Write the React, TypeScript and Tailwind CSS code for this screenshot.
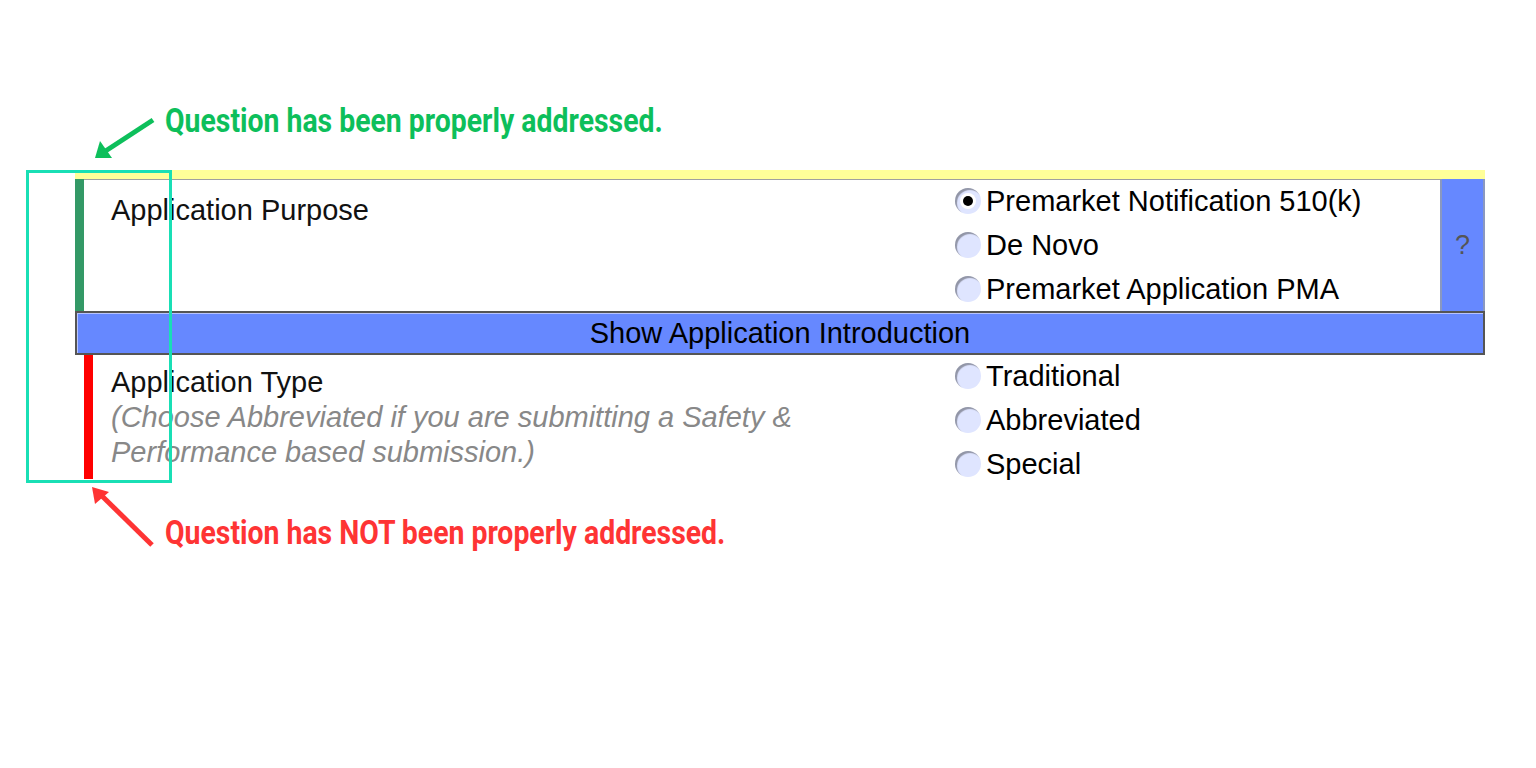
import React from 'react';

type Opt = { label: string; checked?: boolean };

const Radio = ({ label, checked }: Opt) => (
  <div className="h-[44px] flex items-center">
    <span className="relative w-[26px] h-[26px] rounded-full bg-[#dfe5ff] shadow-[inset_2px_2px_1px_rgba(0,0,0,0.35)] flex items-center justify-center shrink-0">
      {checked && (
        <span className="w-[16px] h-[16px] rounded-full bg-white flex items-center justify-center">
          <span className="w-[10px] h-[10px] rounded-full bg-black" />
        </span>
      )}
    </span>
    <span className="ml-[5px] text-black">{label}</span>
  </div>
);

const Arrow = ({ color, d, head }: { color: string; d: string; head: string }) => (
  <svg className="absolute left-0 top-0" width="1536" height="768" viewBox="0 0 1536 768">
    <path d={d} stroke={color} strokeWidth="5" fill="none" />
    <polygon points={head} fill={color} />
  </svg>
);

export default function App() {
  return (
    <div className="relative w-[1536px] h-[768px] bg-white overflow-hidden font-['Liberation_Sans',Arial,sans-serif] text-[29px] leading-[35px]">
      <div className="pt-[170px] pl-[75px]">
        <div className="w-[1410px]">
          {/* status strip */}
          <div className="h-[9px] bg-[#ffff99]" />

          {/* Application Purpose */}
          <div className="flex h-[132px]">
            <div className="w-[9px] bg-[#339966]" />
            <div className="flex flex-1 border-t border-[#a0a0a0]">
              <div className="flex-1 pl-[27px] pt-[13px] text-[#111]">Application Purpose</div>
              <div className="w-[485px] -mt-px">
                <Radio label="Premarket Notification 510(k)" checked />
                <Radio label="De Novo" />
                <Radio label="Premarket Application PMA" />
              </div>
            </div>
            <div className="w-[45px] bg-[#6688ff] border-x-2 border-[#8a98c0] flex items-center justify-center text-[27px] text-[#555]">
              ?
            </div>
          </div>

          {/* intro toggle */}
          <button className="w-full h-[44px] bg-[#6688ff] border-2 border-[#555] shadow-[inset_1px_1px_0_#b8c4ff] text-black text-[29px] leading-[35px] flex items-center justify-center">
            Show Application Introduction
          </button>

          {/* Application Type */}
          <div className="flex h-[124px]">
            <div className="w-[9px]" />
            <div className="w-[9px] bg-[#ff0000]" />
            <div className="flex-1 pl-[18px] pt-[10px]">
              <div className="text-[#111]">Application Type</div>
              <div className="italic text-[#888]">
                (Choose Abbreviated if you are submitting a Safety &amp;
                <br />
                Performance based submission.)
              </div>
            </div>
            <div className="w-[530px] -mt-px">
              <Radio label="Traditional" />
              <Radio label="Abbreviated" />
              <Radio label="Special" />
            </div>
          </div>
        </div>
      </div>

      {/* annotations */}
      <div className="absolute left-[26px] top-[170px] w-[146px] h-[313px] border-[3px] border-[#19dfb5]" />
      <Arrow color="#0dbf5b" d="M153 120 L104 152" head="95,158 100,141 112,158" />
      <Arrow color="#fe3434" d="M152 545 L102 496" head="92,487 95,504 109,492" />
      <div className="absolute left-[165px] top-[100px] font-['Roboto',sans-serif] font-bold text-[34px] leading-[40px] text-[#0dbf5b] whitespace-nowrap origin-left scale-x-[0.835]">
        Question has been properly addressed.
      </div>
      <div className="absolute left-[165px] top-[512px] font-['Roboto',sans-serif] font-bold text-[34px] leading-[40px] text-[#fe3434] whitespace-nowrap origin-left scale-x-[0.835]">
        Question has NOT been properly addressed.
      </div>
    </div>
  );
}
